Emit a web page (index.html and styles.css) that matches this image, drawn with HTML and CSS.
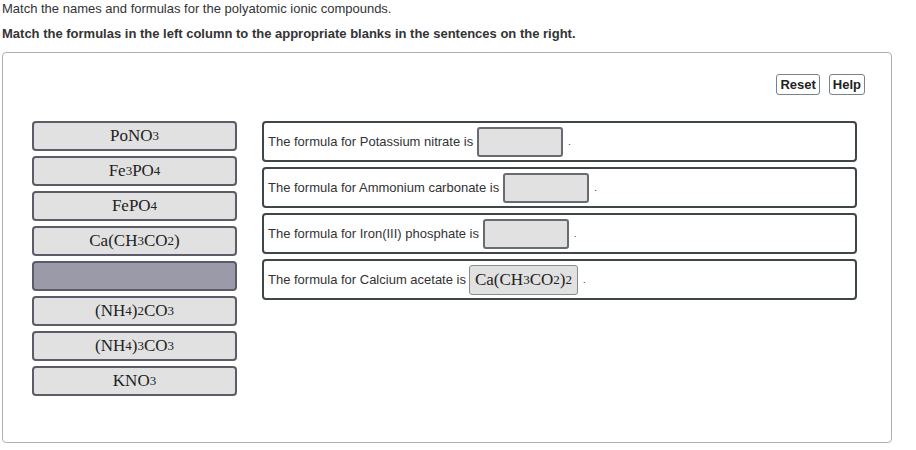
FILE: index.html
```html
<!DOCTYPE html>
<html lang="en">
<head>
    <meta charset="UTF-8">
    <title>Polyatomic Ionic Compounds</title>
    <link rel="stylesheet" href="styles.css">
</head>
<body>

    <p class="intro">Match the names and formulas for the polyatomic ionic compounds.</p>
    <p class="instructions">Match the formulas in the left column to the appropriate blanks in the sentences on the right.</p>

    <div class="panel">
        <div class="toolbar">
            <button class="tool-btn">Reset</button>
            <button class="tool-btn">Help</button>
        </div>

        <div class="workspace">
            <!-- columna de formulas para arrastrar -->
            <div class="choices">
                <div class="choice">PoNO<sub>3</sub></div>
                <div class="choice">Fe<sub>3</sub>PO<sub>4</sub></div>
                <div class="choice">FePO<sub>4</sub></div>
                <div class="choice">Ca(CH<sub>3</sub>CO<sub>2</sub>)</div>
                <div class="choice empty"></div>
                <div class="choice">(NH<sub>4</sub>)<sub>2</sub>CO<sub>3</sub></div>
                <div class="choice">(NH<sub>4</sub>)<sub>3</sub>CO<sub>3</sub></div>
                <div class="choice">KNO<sub>3</sub></div>
            </div>

            <!-- oraciones con espacios en blanco -->
            <div class="sentences">
                <div class="sentence">
                    The formula for Potassium nitrate is
                    <span class="blank"></span>
                    <span class="dot">.</span>
                </div>
                <div class="sentence">
                    The formula for Ammonium carbonate is
                    <span class="blank"></span>
                    <span class="dot">.</span>
                </div>
                <div class="sentence">
                    The formula for Iron(III) phosphate is
                    <span class="blank"></span>
                    <span class="dot">.</span>
                </div>
                <div class="sentence">
                    The formula for Calcium acetate is
                    <span class="blank filled">Ca(CH<sub>3</sub>CO<sub>2</sub>)<sub>2</sub></span>
                    <span class="dot">.</span>
                </div>
            </div>
        </div>
    </div>

</body>
</html>
```

FILE: styles.css
```css
body {
    font-family: 'Liberation Sans', Arial, sans-serif;
    color: #333;
    margin: 0;
    padding: 0 2px;
    background-color: #fff;
}

.intro {
    font-size: 13px;
    margin: 1px 0 0 0;
    line-height: 15px;
}

.instructions {
    font-size: 13px;
    font-weight: bold;
    margin: 10px 0 0 0;
    line-height: 15px;
}

.panel {
    margin-top: 11px;
    width: 888px;
    height: 389px;
    border: 1px solid #b0b0b0;
    border-radius: 4px;
}

.toolbar {
    display: flex;
    justify-content: flex-end;
    gap: 9px;
    padding: 21px 26px 0 0;
}

.tool-btn {
    font-family: 'Liberation Sans', Arial, sans-serif;
    font-size: 13px;
    font-weight: bold;
    color: #222;
    background-color: #fff;
    border: 1px solid #7a8288;
    border-radius: 3px;
    height: 21px;
    padding: 0 3px;
}

.workspace {
    display: flex;
    gap: 25px;
    padding: 26px 0 0 29px;
}

.choices {
    display: flex;
    flex-direction: column;
    gap: 5px;
    width: 205px;
}

.choice {
    height: 26px;
    border: 2px solid #5c5c68;
    border-radius: 4px;
    background-color: #e1e1e1;
    display: flex;
    justify-content: center;
    align-items: center;
    font-family: 'Liberation Serif', 'DejaVu Serif', serif;
    font-size: 17px;
    color: #222;
}

.choice.empty {
    background-color: #9b9aa8;
}

sub {
    font-size: 13px;
    vertical-align: -4px;
    line-height: 0;
}

.sentences {
    display: flex;
    flex-direction: column;
    gap: 5px;
    width: 595px;
}

.sentence {
    height: 37px;
    border: 2px solid #3f464a;
    border-radius: 4px;
    display: flex;
    align-items: center;
    padding-left: 4px;
    font-size: 13px;
    color: #333;
}

.blank {
    display: inline-flex;
    align-items: center;
    justify-content: center;
    width: 82px;
    height: 26px;
    margin-left: 4px;
    border: 2px solid #6a6a72;
    border-radius: 3px;
    background-color: #e1e1e1;
}

.blank.filled {
    width: auto;
    height: 28px;
    padding: 0 5px;
    border: 1px solid #8a8a8a;
    margin-left: 3px;
    font-family: 'Liberation Serif', 'DejaVu Serif', serif;
    font-size: 17px;
    color: #222;
}

.dot {
    font-size: 9px;
    color: #222;
    margin-left: 5px;
    align-self: center;
}
```
